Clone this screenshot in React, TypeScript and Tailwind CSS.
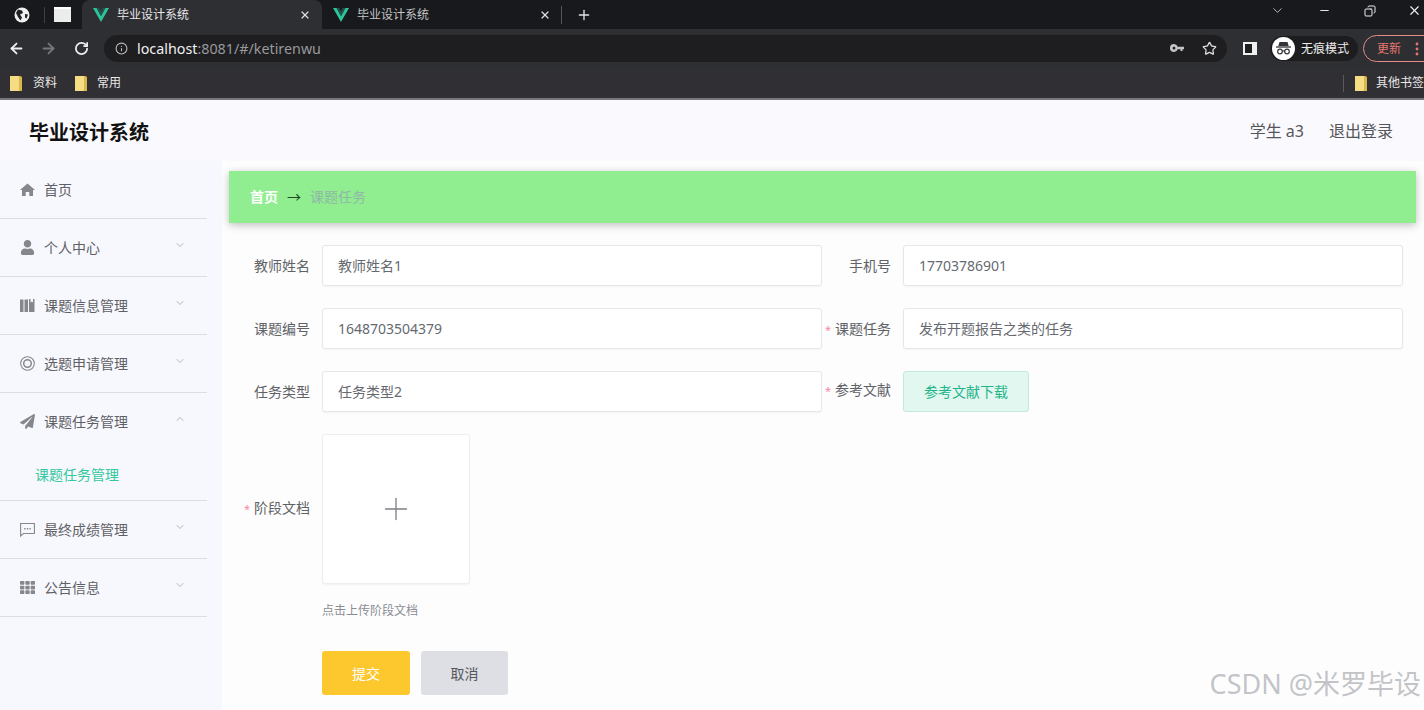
import { ArrowLeft, ArrowRight, ChevronDown, ChevronUp, Copy, Info, Minus, Plus, RotateCw, Star, X } from 'lucide-react';
import { FaPaperPlane, FaTh, FaUser } from 'react-icons/fa';
import type { ComponentType, ReactNode } from 'react';

const VueLogo = () => (
  <svg width="16" height="14" viewBox="0 0 16 14" className="shrink-0">
    <path d="M0 0h3.600L8 8 12.400 0H16L8 14z" fill="#2fc39a" />
    <path d="M3.600 0h2.600L8 3.400 9.800 0h2.600L8 8z" fill="#24514f" />
  </svg>
);

const Folder = () => (
  <svg width="12" height="15" viewBox="0 0 12 15" className="shrink-0">
    <path d="M0 0h9l3 1v14H0z" fill="#f6dc83" />
    <path d="M9 0l3 1v14H9z" fill="#d9b64e" />
  </svg>
);

const IncognitoBadge = () => (
  <div className="w-[23px] h-[23px] rounded-full bg-white flex items-center justify-center shrink-0">
    <svg width="17" height="15" viewBox="0 0 17 15">
      <path d="M4.500 1h8l1.200 4H3.300z" fill="#33343a" />
      <path d="M1 6h15" stroke="#33343a" strokeWidth="1.300" />
      <circle cx="5" cy="10.500" r="2.300" fill="none" stroke="#33343a" strokeWidth="1.200" />
      <circle cx="12" cy="10.500" r="2.300" fill="none" stroke="#33343a" strokeWidth="1.200" />
      <path d="M7.300 10h2.400" stroke="#33343a" strokeWidth="1.200" />
    </svg>
  </div>
);

const KeyIcon = () => (
  <svg width="14" height="9" viewBox="0 0 14 9" className="shrink-0 ml-[18px]">
    <path fillRule="evenodd" d="M4 0a4 4 0 0 1 3.700 2.700H14v2.600h-1.500V7h-2V5.300H7.700A4 4 0 1 1 4 0zm0 2.800a1.400 1.400 0 1 0 0 2.800 1.400 1.400 0 0 0 0-2.800z" fill="#c4c4c5" />
  </svg>
);

const DotsIcon = () => (
  <svg width="4" height="14" viewBox="0 0 4 14" className="shrink-0 ml-[14px]">
    <circle cx="2" cy="2" r="1.400" fill="#e5776f" />
    <circle cx="2" cy="7" r="1.400" fill="#e5776f" />
    <circle cx="2" cy="12" r="1.400" fill="#e5776f" />
  </svg>
);

const HomeIcon = ({ size = 15, className = '' }: { size?: number; className?: string }) => (
  <svg width={size} height={size} viewBox="0 0 15 15" className={className}>
    <path d="M7.500 1.500L15 8h-2v6H9.300v-4H5.700v4H2V8H0z" fill="currentColor" />
  </svg>
);

const BooksIcon = ({ size = 15, className = '' }: { size?: number; className?: string }) => (
  <svg width={size} height={size} viewBox="0 0 15 15" className={className}>
    <path d="M0 1.500h3.500V14H0zM4.500 1.500H8V14H4.500zM9 1h5.500v13H9z" fill="currentColor" />
    <path d="M10.500 1h2.500v3.500l-1.250-1-1.250 1z" fill="#f7f8fd" />
  </svg>
);

const RingIcon = ({ size = 15, className = '' }: { size?: number; className?: string }) => (
  <svg width={size} height={size} viewBox="0 0 15 15" className={className}>
    <circle cx="7.500" cy="7.500" r="6.800" fill="none" stroke="currentColor" strokeWidth="1.100" />
    <circle cx="7.500" cy="7.500" r="3.800" fill="none" stroke="currentColor" strokeWidth="1.500" />
  </svg>
);

const CommentIcon = ({ size = 15, className = '' }: { size?: number; className?: string }) => (
  <svg width={size} height={size} viewBox="0 0 15 15" className={className}>
    <path d="M.600 1.500h13.800v10H3.500L.600 14z" fill="none" stroke="currentColor" strokeWidth="1.100" />
    <path d="M4.200 6h1.400v1.400H4.200zM6.800 6h1.400v1.400H6.800zM9.400 6h1.400v1.400H9.400z" fill="currentColor" />
  </svg>
);

function Tab({ active, muted }: { active?: boolean; muted?: boolean }) {
  return (
    <div className={`w-[240px] h-full flex items-center pl-[11px] pr-[11px] ${active ? 'bg-[#2e2f33] rounded-t-lg' : ''}`}>
      <VueLogo />
      <span className={`ml-[8px] text-[12px] flex-1 ${muted ? 'text-[#c4c5c7]' : 'text-[#e8e8e9]'}`}>毕业设计系统</span>
      <X size={12} strokeWidth={2.500} className="text-[#dcdcdd]" />
    </div>
  );
}

function BrowserChrome() {
  return (
    <div className="shrink-0 border-b-2 border-[#77787c]">
      <div className="h-[29px] bg-[#17191c] flex items-center">
        <div className="w-[45px] flex justify-center border-r border-[#3f4043]">
          <svg width="16" height="16" viewBox="0 0 16 16">
            <circle cx="8" cy="8" r="7.500" fill="#f0f0f0" />
            <path d="M4 2.500l4 1 1 2.500-3 1.500 2 3-1.500 3L4 10 2 6zM11 7l3 .5-1.500 4-1.500-1z" fill="#202124" />
          </svg>
        </div>
        <div className="w-[34px] flex justify-center">
          <div className="w-[17px] h-[15px] bg-[#ececec] border-t-2 border-white" />
        </div>
        <div className="h-full w-[3px]" />
        <div className="h-full flex items-center">
          <Tab active />
          <Tab muted />
        </div>
        <div className="h-[18px] border-l border-[#55565a] ml-[-1px]" />
        <Plus size={16} strokeWidth={2} className="text-[#e2e2e3] ml-[14px]" />
        <div className="flex-1" />
        <div className="flex items-center mb-[8px]">
          <ChevronDown size={15} strokeWidth={1.500} className="text-[#bdbec0] mr-[33px]" />
          <Minus size={13} strokeWidth={1.800} className="text-[#ececec] mr-[33px]" />
          <Copy size={12} strokeWidth={2} className="text-[#ececec] mr-[31px] -scale-x-100" />
          <X size={15} strokeWidth={1.800} className="text-[#f2f2f2] mr-[2px]" />
        </div>
      </div>
      <div className="h-[39px] bg-[#2e2f33] flex items-center pl-[8px]">
        <ArrowLeft size={17} strokeWidth={2.500} className="text-[#eeeeef] shrink-0" />
        <ArrowRight size={17} strokeWidth={2.500} className="text-[#77787b] ml-[15px] shrink-0" />
        <RotateCw size={15} strokeWidth={2.800} className="text-[#eeeeef] ml-[17px] shrink-0" />
        <div className="ml-[15px] w-[1123px] shrink-0 h-[27px] rounded-full bg-[#1e1d20] flex items-center pl-[11px] pr-[10px]">
          <Info size={13} className="text-[#bdbdbe]" />
          <span className="ml-[9px] text-[14.300px] text-[#f0f0f0]">localhost</span>
          <span className="text-[14.300px] text-[#98999b]">:8081/#/ketirenwu</span>
          <div className="flex-1" />
          <KeyIcon />
          <Star size={15} strokeWidth={2} className="text-[#e0e0e0] ml-[18px]" />
        </div>
        <div className="w-[14px] h-[13px] bg-[#1e1d20] border-2 border-r-[5px] border-[#f0f0f0] ml-[16px] shrink-0" />
        <div className="ml-[13px] w-[88px] h-[25px] rounded-full bg-[#1d1d20] flex items-center shrink-0 pl-[2px]">
          <IncognitoBadge />
          <span className="ml-[6px] text-[12px] text-[#ececec] whitespace-nowrap">无痕模式</span>
        </div>
        <div className="ml-[5px] w-[70px] h-[27px] shrink-0 rounded-l-full border border-[#e58c86] flex items-center pl-[13px]">
          <span className="text-[12px] text-[#e5776f]">更新</span>
          <DotsIcon />
        </div>
      </div>
      <div className="h-[30px] bg-[#302f33] flex items-center pl-[10px]">
        <Folder />
        <span className="ml-[11px] text-[12px] text-[#e8e8e8]">资料</span>
        <div className="ml-[18px]"><Folder /></div>
        <span className="ml-[10px] text-[12px] text-[#e8e8e8]">常用</span>
        <div className="flex-1" />
        <div className="h-[17px] border-l border-[#5a5a5d] mr-[11px]" />
        <Folder />
        <span className="ml-[9px] text-[12px] text-[#e8e8e8] whitespace-nowrap w-[48px] overflow-hidden">其他书签</span>
      </div>
    </div>
  );
}

type MenuItem = { label: string; icon: ComponentType<{ size?: number; className?: string }>; arrow?: boolean; open?: boolean; sub?: string };

const menu: MenuItem[] = [
  { label: '首页', icon: HomeIcon },
  { label: '个人中心', icon: FaUser, arrow: true },
  { label: '课题信息管理', icon: BooksIcon, arrow: true },
  { label: '选题申请管理', icon: RingIcon, arrow: true },
  { label: '课题任务管理', icon: FaPaperPlane, arrow: true, open: true, sub: '课题任务管理' },
  { label: '最终成绩管理', icon: CommentIcon, arrow: true },
  { label: '公告信息', icon: FaTh, arrow: true },
];

function Sidebar() {
  return (
    <div className="w-[207px] shrink-0">
      {menu.map((m) => {
        const Icon = m.icon;
        return (
          <div key={m.label} className="border-b border-[#dcdde3]">
            <div className="h-[57px] flex items-center pl-[20px] pr-[21px] text-[#5f6066]">
              <Icon size={15} className="text-[#86878c] shrink-0" />
              <span className="ml-[9px] text-[14px] flex-1">{m.label}</span>
              {m.arrow && (m.open
                ? <ChevronUp size={12} className="text-[#b4b6bb] mb-[6px]" />
                : <ChevronDown size={12} className="text-[#b4b6bb] mb-[6px]" />)}
            </div>
            {m.sub && <div className="h-[50px] pl-[35px] pb-[2px] flex items-center text-[14px] text-[#35c7a0]">{m.sub}</div>}
          </div>
        );
      })}
    </div>
  );
}

function Label({ children, required, width }: { children: ReactNode; required?: boolean; width: string }) {
  return (
    <div className={`${width} shrink-0 pr-[12px] text-right text-[14px] text-[#606266] whitespace-nowrap`}>
      {required && <span className="text-[11px] text-[#f58aa0] mr-[4px]">*</span>}
      {children}
    </div>
  );
}

function Field({ label, value, required, width }: { label: string; value: string; required?: boolean; width: string }) {
  return (
    <div className="flex items-center">
      <Label required={required} width={width}>{label}</Label>
      <div className="w-[500px] h-[41px] bg-white border border-[#e6e7ec] rounded-[3px] shadow-[0_1px_2px_rgba(0,0,0,0.04)] flex items-center pl-[15px] text-[14px] text-[#666a70]">{value}</div>
    </div>
  );
}

export default function App() {
  return (
    <div className="relative w-[1424px] h-[710px] overflow-hidden flex flex-col bg-[#fdfdfe] font-['Noto_Sans','Noto_Sans_CJK_SC',sans-serif]">
      <BrowserChrome />
      <div className="h-[61px] shrink-0 bg-[#fafafe] flex items-center pl-[29px] pr-[31px]">
        <span className="mt-[5px] text-[20px] font-bold text-[#111111]">毕业设计系统</span>
        <div className="flex-1" />
        <span className="text-[16px] text-[#55565a]">学生 a3</span>
        <span className="ml-[25px] text-[16px] text-[#55565a]">退出登录</span>
      </div>
      <div className="flex flex-1 min-h-0">
        <div className="w-[222px] shrink-0 bg-[#f7f8fd]">
          <Sidebar />
        </div>
        <div className="flex-1 min-w-0 pl-[7px] pr-[8px] pt-[10px] bg-[#fdfdfe]">
          <div className="h-[52px] bg-[#90ee90] shadow-[0_2px_8px_rgba(0,0,0,0.25)] flex items-center pl-[21px] pb-[2px] text-[14px]">
            <span className="font-bold text-white">首页</span>
            <span className="ml-[9px] text-[#1f4a1f]">→</span>
            <span className="ml-[9px] text-[#8fb8a6]">课题任务</span>
          </div>
          <div className="mt-[22px] -ml-[1px] flex flex-col gap-[22px]">
            <div className="flex">
              <Field label="教师姓名" value="教师姓名1" width="w-[94px]" />
              <Field label="手机号" value="17703786901" width="w-[81px]" />
            </div>
            <div className="flex">
              <Field label="课题编号" value="1648703504379" width="w-[94px]" />
              <Field label="课题任务" value="发布开题报告之类的任务" required width="w-[81px]" />
            </div>
            <div className="flex">
              <Field label="任务类型" value="任务类型2" width="w-[94px]" />
              <div className="flex items-center">
                <div className="pb-[5px]">
                  <Label required width="w-[81px]">参考文献</Label>
                </div>
                <div className="w-[126px] h-[41px] bg-[#e3f7f1] border border-[#bfeadd] rounded-[3px] flex items-center justify-center text-[14px] text-[#1fb589]">参考文献下载</div>
              </div>
            </div>
            <div className="flex items-center">
              <div className="pb-[3px]">
                <Label required width="w-[94px]">阶段文档</Label>
              </div>
              <div className="w-[148px] h-[150px] bg-white border border-[#eceef1] rounded-[3px] shadow-[0_1px_2px_rgba(0,0,0,0.05)] flex items-center justify-center">
                <Plus size={36} strokeWidth={0.900} className="text-[#7e8085]" />
              </div>
            </div>
          </div>
          <div className="mt-[18px] ml-[93px] text-[12px] text-[#8b8d93]">点击上传阶段文档</div>
          <div className="mt-[31px] ml-[93px] flex gap-[11px]">
            <div className="w-[88px] h-[44px] bg-[#fdc72e] rounded-[3px] flex items-center justify-center text-[14px] text-white">提交</div>
            <div className="w-[87px] h-[44px] bg-[#dedfe5] rounded-[3px] flex items-center justify-center text-[14px] text-[#55565a]">取消</div>
          </div>
        </div>
      </div>
      <div className="absolute right-[3px] bottom-[8px] text-[27px] leading-[36px] text-[#b4b5b8]/80 whitespace-nowrap">CSDN @米罗毕设</div>
    </div>
  );
}
